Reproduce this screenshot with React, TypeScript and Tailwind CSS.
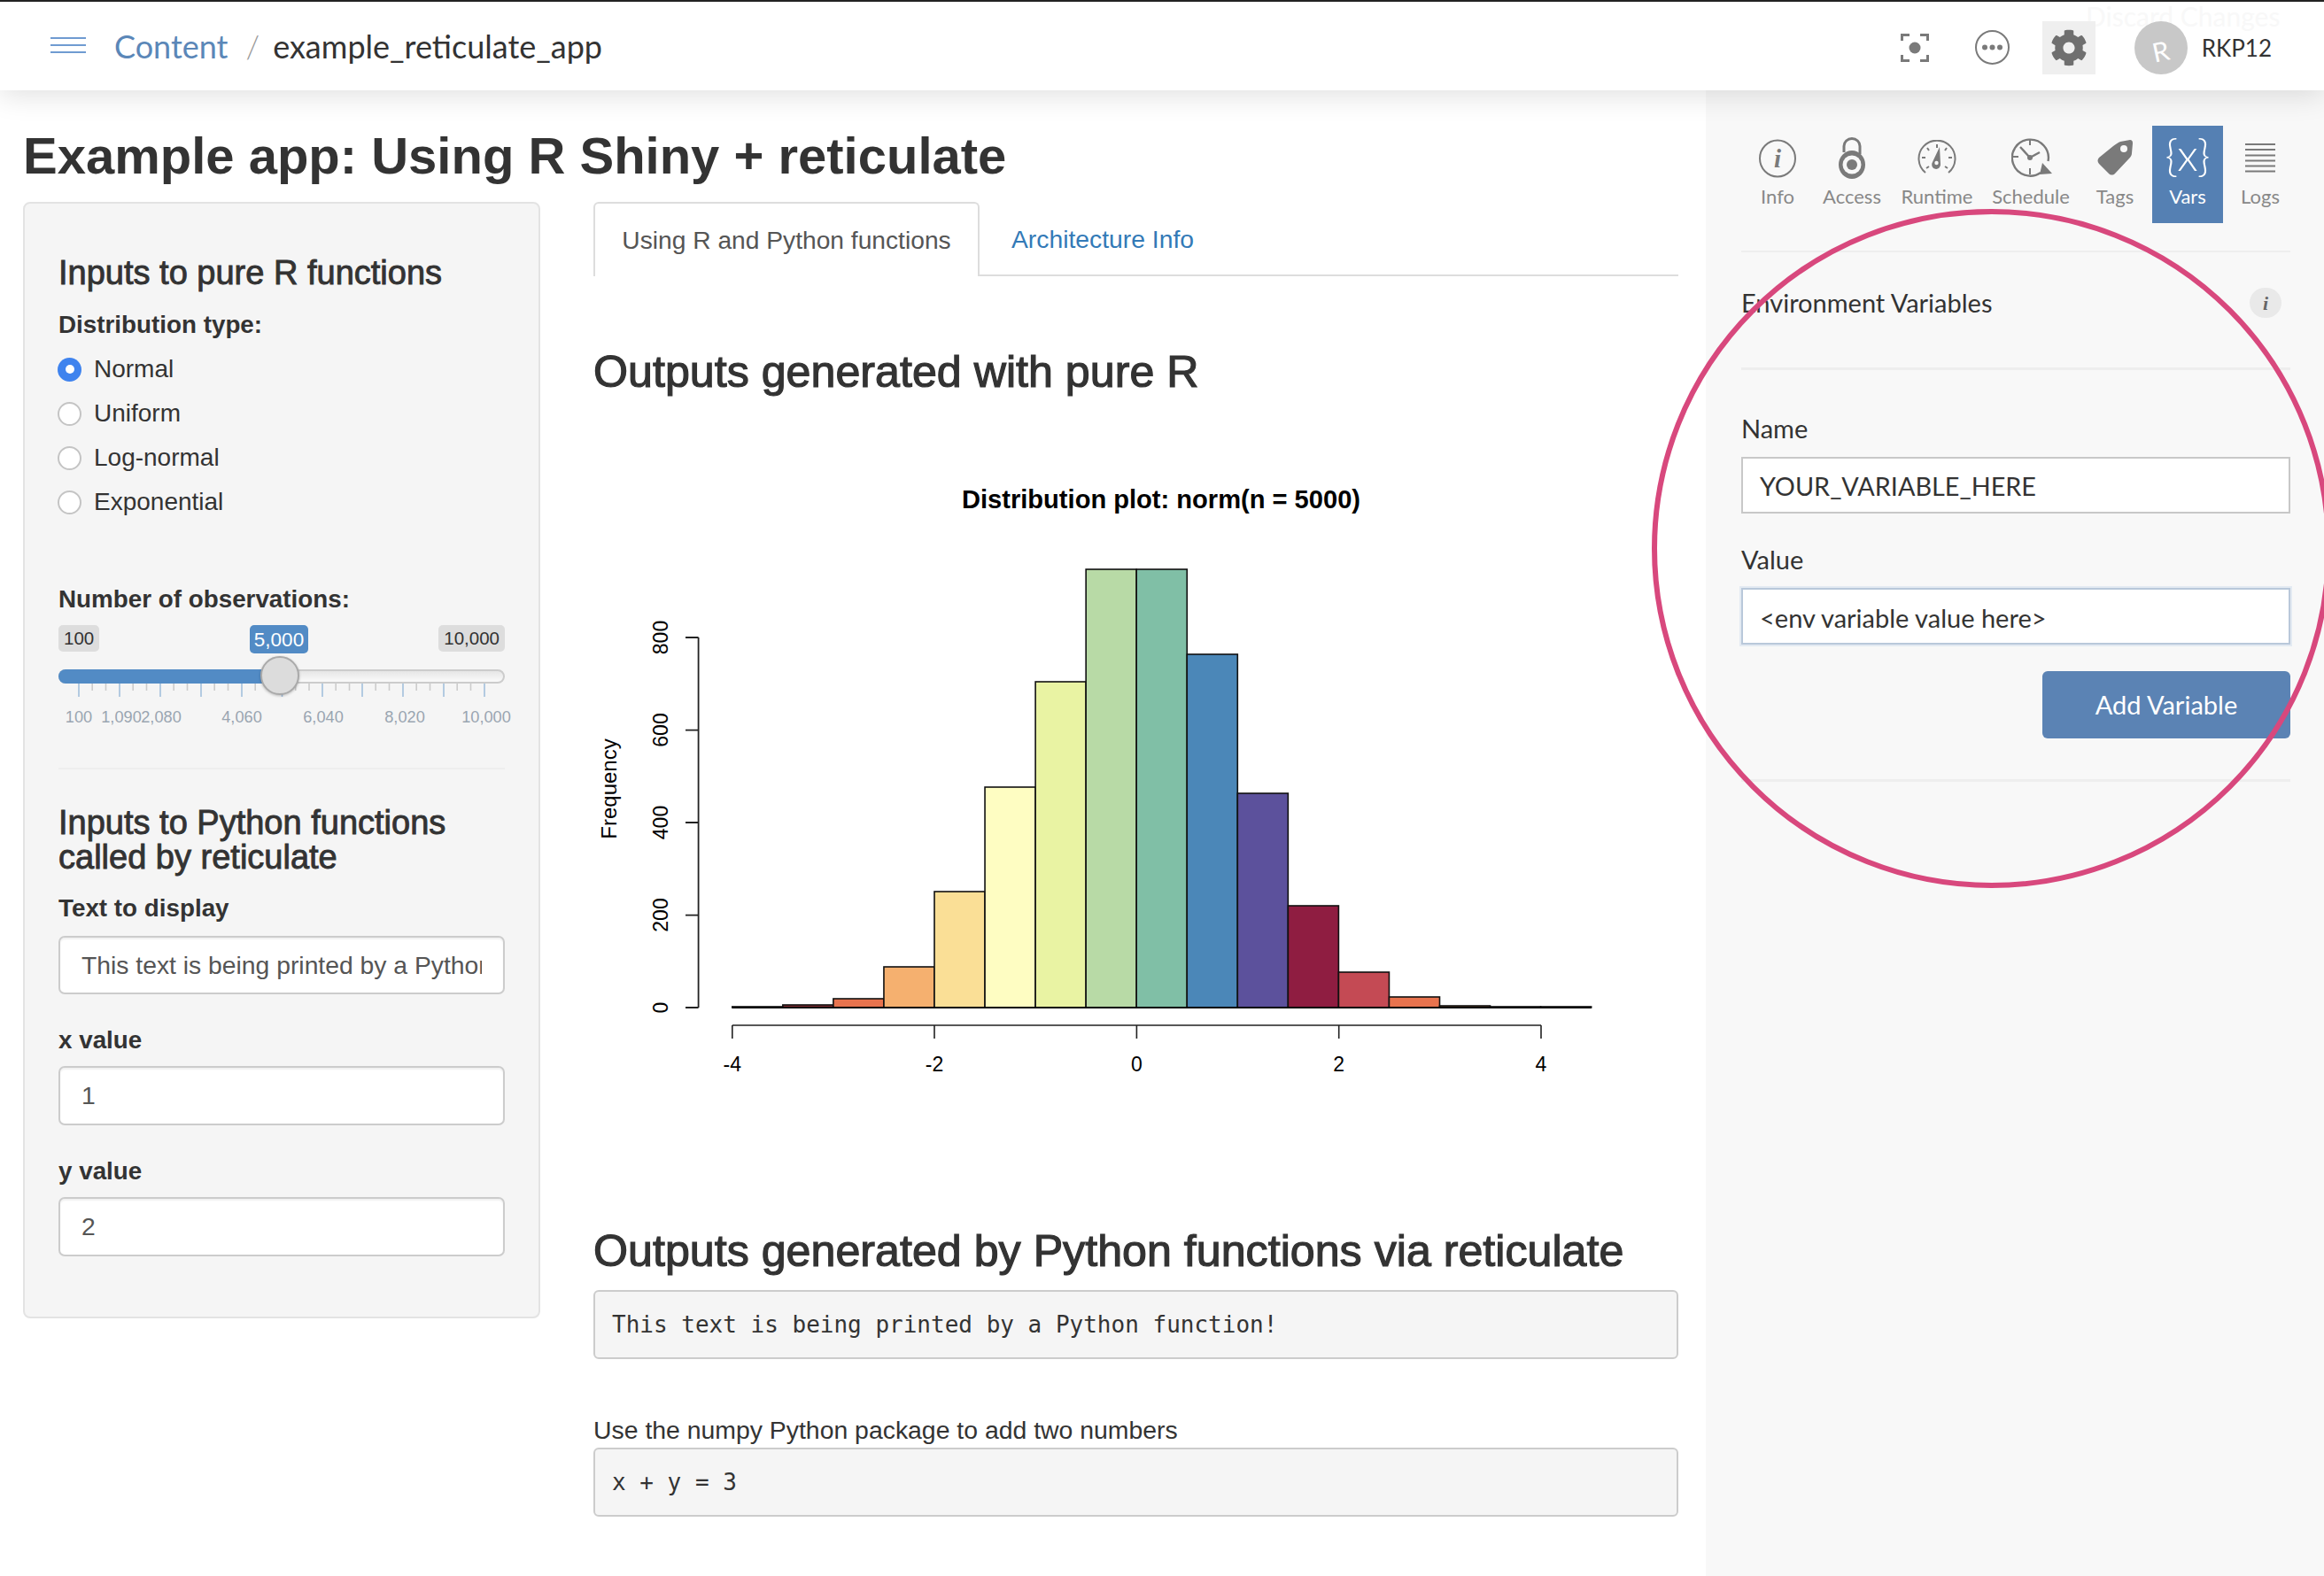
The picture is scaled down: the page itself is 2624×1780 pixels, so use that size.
import { FaCog } from "react-icons/fa";

const sans = "font-['Liberation_Sans',Arial,sans-serif]";

const bars = [
  { top: 1136, color: "#3a3a3a" },
  { top: 1134, color: "#7e2b30" },
  { top: 1127, color: "#e8734e" },
  { top: 1091, color: "#f5b06f" },
  { top: 1006, color: "#fadf96" },
  { top: 888, color: "#fefdc2" },
  { top: 769, color: "#e9f3a3" },
  { top: 642, color: "#b8daa6" },
  { top: 642, color: "#80bfa6" },
  { top: 738, color: "#4b87b8" },
  { top: 895, color: "#5c519c" },
  { top: 1022, color: "#8f1d41" },
  { top: 1097, color: "#c44a54" },
  { top: 1125, color: "#e8734e" },
  { top: 1135, color: "#a0622f" },
  { top: 1136, color: "#222222" },
  { top: 1136, color: "#222222" },
];

const Histogram = () => {
  const x0 = 826.8;
  const step = 57.05;
  const base = 1137;
  return (
    <svg viewBox="670 519 1225 740" className="mt-[70px] block h-[740px] w-[1225px]">
      <text x="1311" y="573" textAnchor="middle" fontFamily="Liberation Sans" fontWeight="700" fontSize="30" textLength="450" lengthAdjust="spacingAndGlyphs" fill="#000">
        Distribution plot: norm(n = 5000)
      </text>
      {bars.map((b, i) => (
        <rect key={i} x={x0 + i * step} y={b.top} width={step} height={base - b.top} fill={b.color} stroke="#111" strokeWidth="1.6" />
      ))}
      <line x1={x0} x2={x0 + 17 * step} y1={base} y2={base} stroke="#000" strokeWidth="2" />
      {/* y axis */}
      <path d="M788.6 719 V1137 M774 719 H788.6 M774 823.6 H788.6 M774 928 H788.6 M774 1032.6 H788.6 M774 1137 H788.6" fill="none" stroke="#222" strokeWidth="1.8" />
      {[0, 200, 400, 600, 800].map((v) => {
        const y = 1137 - v * 0.5225;
        return (
          <text key={v} x="754" y={y} transform={`rotate(-90 754 ${y})`} textAnchor="middle" fontFamily="Liberation Sans" fontSize="23" fill="#000">
            {v}
          </text>
        );
      })}
      <text x="696" y="890" transform="rotate(-90 696 890)" textAnchor="middle" fontFamily="Liberation Sans" fontSize="24" fill="#000">
        Frequency
      </text>
      {/* x axis */}
      <path d="M826.8 1157 H1740 M826.8 1157 V1172 M1055 1157 V1172 M1283.4 1157 V1172 M1511.7 1157 V1172 M1740 1157 V1172" fill="none" stroke="#222" strokeWidth="1.6" />
      {[-4, -2, 0, 2, 4].map((v) => (
        <text key={v} x={1283.4 + v * 114.15} y="1209" textAnchor="middle" fontFamily="Liberation Sans" fontSize="23" fill="#000">
          {v}
        </text>
      ))}
    </svg>
  );
};

const Radio = ({ label, checked }: { label: string; checked?: boolean }) => (
  <div className="-ml-[1px] flex h-[50px] items-center">
    {checked ? (
      <span className="flex h-[27px] w-[27px] items-center justify-center rounded-full bg-[#3f83ee]">
        <span className="h-[10px] w-[10px] rounded-full bg-white" />
      </span>
    ) : (
      <span className="h-[27px] w-[27px] rounded-full border-2 border-[#c4c4c4] bg-white" />
    )}
    <span className="ml-[14px] text-[28px] text-[#333]">{label}</span>
  </div>
);

const inputCls =
  "block w-full rounded-[7px] border-2 border-[#ccc] bg-white px-[24px] text-[28.3px] text-[#555] outline-none shadow-[inset_0_2px_2px_rgba(0,0,0,0.06)] font-['Liberation_Sans',Arial,sans-serif]";

const labelCls = "text-[27.8px] font-bold leading-[36px] text-[#333]";

const majorTicks = [23, 69, 115, 161, 207, 252.5, 298, 343, 389, 435, 481];

const tickLabels = [
  { x: 23, t: "100" },
  { x: 71, t: "1,090" },
  { x: 116, t: "2,080" },
  { x: 207, t: "4,060" },
  { x: 299, t: "6,040" },
  { x: 391, t: "8,020" },
  { x: 483, t: "10,000" },
];

const Slider = () => (
  <div className="relative mt-[11px] h-[124px] w-[504px]">
    <div className="flex items-start justify-between text-[20.5px] text-[#333]">
      <span className="flex h-[30px] items-center rounded-[5px] bg-[#ddd] px-[6px] pt-[1px]">100</span>
      <span className="flex h-[30px] items-center rounded-[5px] bg-[#ddd] px-[6px] pt-[1px]">10,000</span>
    </div>
    <span className="absolute left-[216px] top-0 flex h-[32px] w-[66px] items-center justify-center rounded-[5px] bg-[#528bc5] pt-[1px] text-[22.5px] text-white">
      5,000
    </span>
    <div className="absolute left-0 top-[50px] h-[16px] w-full rounded-full border-2 border-[#ccc] bg-gradient-to-b from-[#e6e6e6] to-[#fafafa]" />
    <div className="absolute left-0 top-[50px] h-[16px] w-[252px] rounded-l-full bg-[#528bc5]" />
    <svg className="absolute left-0 top-[66px] h-[58px] w-[504px] overflow-visible">
      {majorTicks.map((x, i) =>
        i < majorTicks.length - 1 ? (
          <g key={x}>
            <line x1={x + 15.2} x2={x + 15.2} y1="0" y2="8" stroke="#ccc" strokeWidth="1.6" />
            <line x1={x + 30.5} x2={x + 30.5} y1="0" y2="8" stroke="#ccc" strokeWidth="1.6" />
          </g>
        ) : null
      )}
      {majorTicks.map((x) => (
        <line key={x} x1={x} x2={x} y1="0" y2="15" stroke="#a3c0dc" strokeWidth="1.6" />
      ))}
      {tickLabels.map((l) => (
        <text key={l.t} x={l.x} y="44" textAnchor="middle" fontFamily="Liberation Sans" fontSize="18.2" fill="#9aa5b1">
          {l.t}
        </text>
      ))}
    </svg>
    <div className="absolute left-[228px] top-[35px] h-[44px] w-[44px] rounded-full border-2 border-[#aaa] bg-[#dcdcdc] shadow-[0_1px_3px_rgba(0,0,0,0.25)]" />
  </div>
);

const Sidebar = () => (
  <div className={`w-[584px] shrink-0 rounded-[8px] border-2 border-[#e3e3e3] bg-[#f5f5f5] px-[38px] pb-[68px] pt-[58px] ${sans}`}>
    <h3 className="text-[38px] leading-[40px] text-[#333] [-webkit-text-stroke:0.9px_#333]">Inputs to pure R functions</h3>
    <div className={`mt-[21px] ${labelCls}`}>Distribution type:</div>
    <div className="mt-[7px]">
      <Radio label="Normal" checked />
      <Radio label="Uniform" />
      <Radio label="Log-normal" />
      <Radio label="Exponential" />
    </div>
    <div className={`mt-[67px] ${labelCls}`}>Number of observations:</div>
    <Slider />
    <div className="mt-[37px] h-[2px] bg-[#eee]" />
    <h3 className="mt-[41px] text-[38px] leading-[39px] text-[#333] [-webkit-text-stroke:0.9px_#333]">
      Inputs to Python functions
      <br />
      called by reticulate
    </h3>
    <div className={`mt-[20px] ${labelCls}`}>Text to display</div>
    <input readOnly defaultValue="This text is being printed by a Python function!" className={`mt-[13px] h-[66px] ${inputCls}`} />
    <div className={`mt-[34px] ${labelCls}`}>x value</div>
    <input readOnly defaultValue="1" className={`mt-[11px] h-[67px] ${inputCls}`} />
    <div className={`mt-[34px] ${labelCls}`}>y value</div>
    <input readOnly defaultValue="2" className={`mt-[11px] h-[67px] ${inputCls}`} />
  </div>
);

const preCls =
  "flex items-center rounded-[6px] border-2 border-[#ccc] bg-[#f5f5f5] px-[19px] text-[26px] text-[#333] font-['DejaVu_Sans_Mono',monospace] whitespace-pre";

const h2Cls = "text-[50.2px] leading-[60px] text-[#333] [-webkit-text-stroke:1.2px_#333]";

const MainColumn = () => (
  <div className={`w-[1225px] shrink-0 ${sans}`}>
    <div className="flex h-[84px] border-b-2 border-[#ddd]">
      <div className="-mb-[2px] flex h-[84px] w-[436px] items-center justify-center rounded-t-[6px] border-2 border-b-0 border-[#ddd] bg-white text-[28.2px] text-[#555]">
        Using R and Python functions
      </div>
      <div className="ml-[36px] flex items-center pt-[2px] text-[28.3px] text-[#337ab7]">Architecture Info</div>
    </div>
    <h2 className={`mt-[78px] ${h2Cls}`}>Outputs generated with pure R</h2>
    <Histogram />
    <h2 className={`mt-[123px] ${h2Cls}`}>Outputs generated by Python functions via reticulate</h2>
    <div className={`mt-[14px] h-[78px] ${preCls}`}>This text is being printed by a Python function!</div>
    <p className="mt-[60px] text-[28.4px] leading-[40px] text-[#333]">Use the numpy Python package to add two numbers</p>
    <div className={`h-[78px] ${preCls}`}>x + y = 3</div>
  </div>
);

const InfoIcon = () => (
  <svg className="mt-[2px]" width="42" height="46" viewBox="0 0 42 46">
    <ellipse cx="21" cy="23" rx="20" ry="20.5" fill="none" stroke="#7a7a7a" strokeWidth="2" />
    <text x="21" y="33" textAnchor="middle" fontFamily="Liberation Serif" fontStyle="italic" fontWeight="700" fontSize="29" fill="#7a7a7a">
      i
    </text>
  </svg>
);

const AccessIcon = () => (
  <svg width="30" height="47" viewBox="0 0 30 47">
    <path d="M6 17 V10 a9 8.5 0 0 1 18 0 V19" fill="none" stroke="#7a7a7a" strokeWidth="3" />
    <ellipse cx="15" cy="31" rx="15" ry="16" fill="#7a7a7a" />
    <circle cx="15" cy="31" r="10.5" fill="#f8f8f8" />
    <circle cx="15" cy="31" r="6" fill="#7a7a7a" />
  </svg>
);

const RuntimeIcon = () => (
  <svg width="44" height="40" viewBox="0 0 44 40" fill="none" stroke="#7a7a7a">
    <path d="M9 37 A20.5 20.5 0 1 1 35 37" strokeWidth="2" />
    <path d="M22 5 V9 M11 9 L13 12 M33 9 L31 12 M5 20 H9 M39 20 H35 M10 32 L13 30 M34 32 L31 30" strokeWidth="2" />
    <path d="M25 8 L17 25 a5 5 0 1 0 9 2 Z" fill="#7a7a7a" stroke="none" />
    <circle cx="21.5" cy="26" r="2.2" fill="#f8f8f8" stroke="none" />
  </svg>
);

const ScheduleIcon = () => (
  <svg className="ml-[2px]" width="46" height="46" viewBox="0 0 46 46" fill="none" stroke="#7a7a7a">
    <path d="M33 40 A20.5 20.5 0 1 1 41.5 27" strokeWidth="2.4" />
    <path d="M21 2 V9 M21 35 V42 M1 22 H8" strokeWidth="2" />
    <path d="M10 11 L21 23 L32 17" strokeWidth="2.4" />
    <circle cx="21" cy="23" r="3" fill="#7a7a7a" stroke="none" />
    <path d="M35 29 L46 41 L32 42 Z" fill="#7a7a7a" stroke="none" />
  </svg>
);

const TagsIcon = () => (
  <svg width="40" height="40" viewBox="0 0 40 40">
    <path d="M37 0 C39 0 40 1 40 4 L39 15 C39 17 38 19 36 21 L20 38 C18 40 15 40 13 38 L2 27 C0 25 0 22 2 20 L18 7 C21 5 23 3 26 2 Z" fill="#7a7a7a" />
    <circle cx="30" cy="10" r="4" fill="#f8f8f8" />
  </svg>
);

const LogsIcon = () => (
  <svg width="34" height="34" viewBox="0 0 34 34">
    <path d="M0 2 H34 M0 8 H34 M0 14.5 H34 M0 20.5 H34 M0 26.5 H34 M0 32.5 H34" stroke="#7a7a7a" strokeWidth="2.2" />
  </svg>
);

const tabs = [
  { label: "Info", w: "w-[82px]", icon: <InfoIcon /> },
  { label: "Access", w: "w-[86px]", icon: <AccessIcon /> },
  { label: "Runtime", w: "w-[106px]", icon: <RuntimeIcon /> },
  { label: "Schedule", w: "w-[106px]", icon: <ScheduleIcon /> },
  { label: "Tags", w: "w-[84px]", icon: <TagsIcon /> },
];

const Tab = ({ label, w, children }: { label: string; w: string; children: React.ReactNode }) => (
  <div className={`flex h-[110px] ${w} flex-col items-center`}>
    <div className="mt-[11px] flex h-[50px] items-center justify-center">{children}</div>
    <div className="mt-[5px] text-[22px] leading-[28px] text-[#888]">{label}</div>
  </div>
);

const RightPanel = () => (
  <div className="h-[1678px] w-[698px] shrink-0 bg-[#f8f8f8] pl-[40px] pr-[38px] pt-[40px] font-['Lato',sans-serif]">
    <div className="-mr-[8px] flex">
      {tabs.map((t) => (
        <Tab key={t.label} label={t.label} w={t.w}>
          {t.icon}
        </Tab>
      ))}
      <div className="flex h-[110px] w-[80px] flex-col items-center bg-[#5580b3] text-white">
        <div className="mt-[7px] flex h-[50px] items-center justify-center text-[50px] font-light">{"{x}"}</div>
        <div className="mt-[9px] text-[22px] leading-[28px]">Vars</div>
      </div>
      <Tab label="Logs" w="w-[84px]">
        <LogsIcon />
      </Tab>
    </div>
    <div className="mt-[31px] h-[2px] bg-[#eee]" />
    <div className="mt-[40px] flex h-[34px] items-center justify-between pr-[10px]">
      <span className="text-[29px] text-[#333]">Environment Variables</span>
      <span className="flex h-[34px] w-[36px] items-center justify-center rounded-full bg-[#e9e9e9] font-['Liberation_Serif',serif] text-[22px] font-bold italic text-[#666]">
        i
      </span>
    </div>
    <div className="mt-[56px] h-[3px] bg-[#eee]" />
    <div className="mt-[47px] text-[29px] leading-[38px] text-[#333]">Name</div>
    <div className="mt-[13px] flex h-[64px] items-center border-2 border-[#c8c8c8] bg-white pl-[19px] pt-[4px] text-[28.8px] text-[#333]">YOUR_VARIABLE_HERE</div>
    <div className="mt-[33px] text-[29px] leading-[38px] text-[#333]">Value</div>
    <div className="mt-[13px] flex h-[64px] items-center border-2 border-[#b9c8da] bg-white pl-[19px] pt-[3px] text-[29px] text-[#333] shadow-[0_0_0_2px_#e3eaf2]">
      {"<env variable value here>"}
    </div>
    <div className="mt-[30px] flex justify-end">
      <div className="flex h-[76px] w-[280px] items-center justify-center rounded-[6px] bg-[#5b83b4] text-[29px] text-white">Add Variable</div>
    </div>
    <div className="mt-[46px] h-[3px] bg-[#eee]" />
  </div>
);

const Header = () => (
  <div className="relative z-10 flex h-[102px] items-center border-t-2 border-[#222] bg-white pl-[57px] pr-[59px] pt-[3px] font-['Lato',sans-serif] shadow-[0_6px_30px_rgba(0,0,0,0.12)]">
    <div className="-mt-[6px] flex h-[18px] w-[40px] flex-col justify-between">
      <span className="h-[2px] bg-[#6f9bd1]" />
      <span className="h-[2px] bg-[#6f9bd1]" />
      <span className="h-[2px] bg-[#6f9bd1]" />
    </div>
    <span className="-mt-[3px] ml-[32px] text-[36px] text-[#5b87b8]">Content</span>
    <span className="-mt-[3px] ml-[20px] text-[36px] font-light text-[#999]">/</span>
    <span className="-mt-[3px] ml-[15px] text-[36px] text-[#333]">example_reticulate_app</span>
    {/* barely visible leftover label at the top edge of the bar */}
    <span className="absolute left-[2355px] top-[1px] text-[30px] leading-[30px] text-[#f8f8f8]">Discard Changes</span>
    <div className="relative ml-auto flex items-center">
      <svg width="32" height="32" viewBox="0 0 32 32" fill="none" stroke="#7a7a7a" strokeWidth="3">
        <path d="M10 1.5 H1.5 V8 M22 1.5 H30.5 V8 M10 30.5 H1.5 V24 M22 30.5 H30.5 V24" />
        <circle cx="16" cy="16" r="6.5" fill="#7a7a7a" stroke="none" />
      </svg>
      <svg className="ml-[52px]" width="39" height="39" viewBox="0 0 39 39">
        <circle cx="19.5" cy="19.5" r="18.5" fill="none" stroke="#7a7a7a" strokeWidth="2" />
        <circle cx="11" cy="19.5" r="3" fill="#7a7a7a" />
        <circle cx="19.5" cy="19.5" r="3" fill="#7a7a7a" />
        <circle cx="28" cy="19.5" r="3" fill="#7a7a7a" />
      </svg>
      <div className="ml-[37px] flex h-[60px] w-[60px] items-center justify-center bg-[#efefef]">
        <FaCog className="text-[42px] text-[#6f6f6f]" />
      </div>
      <div className="ml-[44px] flex h-[60px] w-[60px] items-center justify-center rounded-full bg-[#c8c8c8]">
        <span className="mt-[6px] -rotate-12 text-[30px] leading-[36px] text-white">R</span>
      </div>
      <span className="ml-[16px] mt-[1px] text-[26px] leading-[32px] text-[#333]">RKP12</span>
    </div>
  </div>
);

const App = () => {
  return (
    <div className="relative h-[1780px] w-[2624px] overflow-hidden bg-white">
      <Header />
      <div className="flex">
        <div className="w-[1926px] shrink-0 pl-[26px]">
          <h1 className={`mt-[39px] text-[58px] font-bold leading-[70px] text-[#333] ${sans}`}>Example app: Using R Shiny + reticulate</h1>
          <div className="mt-[17px] flex items-start gap-[60px]">
            <Sidebar />
            <MainColumn />
          </div>
        </div>
        <RightPanel />
      </div>
      {/* annotation ring drawn over the screenshot */}
      <div className="pointer-events-none absolute left-[1865px] top-[236px] z-20 h-[767px] w-[767px] rounded-full border-[6px] border-[#d8487d]" />
    </div>
  );
};

export default App;
